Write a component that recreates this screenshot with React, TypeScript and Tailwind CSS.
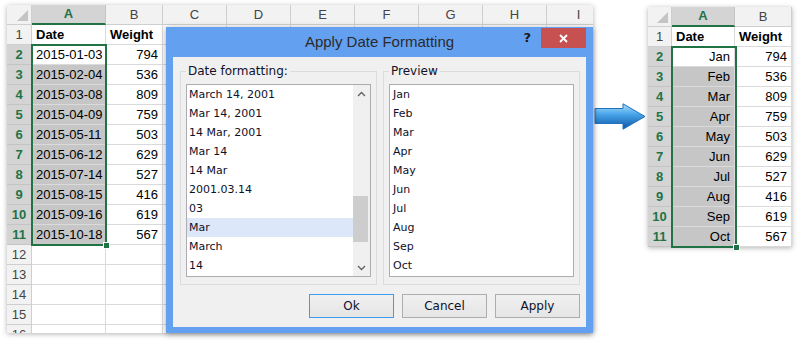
import React from 'react'

type Cell = { t: string; right?: boolean; bold?: boolean }

type SheetProps = {
  gridCols: string
  cols: string[]
  rows: Cell[][]
}

const leftRows: Cell[][] = [
  [{ t: 'Date', bold: true }, { t: 'Weight', bold: true }],
  [{ t: '2015-01-03' }, { t: '794', right: true }],
  [{ t: '2015-02-04' }, { t: '536', right: true }],
  [{ t: '2015-03-08' }, { t: '809', right: true }],
  [{ t: '2015-04-09' }, { t: '759', right: true }],
  [{ t: '2015-05-11' }, { t: '503', right: true }],
  [{ t: '2015-06-12' }, { t: '629', right: true }],
  [{ t: '2015-07-14' }, { t: '527', right: true }],
  [{ t: '2015-08-15' }, { t: '416', right: true }],
  [{ t: '2015-09-16' }, { t: '619', right: true }],
  [{ t: '2015-10-18' }, { t: '567', right: true }],
  [], [], [], [], [],
]

const months = ['Jan', 'Feb', 'Mar', 'Apr', 'May', 'Jun', 'Jul', 'Aug', 'Sep', 'Oct']
const weights = ['794', '536', '809', '759', '503', '629', '527', '416', '619', '567']

const rightRows: Cell[][] = [
  [{ t: 'Date', bold: true }, { t: 'Weight', bold: true }],
  ...months.map((m, i) => [{ t: m, right: true }, { t: weights[i], right: true }]),
]

const formats = ['March 14, 2001', 'Mar 14, 2001', '14 Mar, 2001', 'Mar 14', '14 Mar', '2001.03.14', '03', 'Mar', 'March', '14']

function Sheet({ gridCols, cols, rows }: SheetProps) {
  return (
    <div className={`grid ${gridCols} auto-rows-[20px] text-[13px] text-black font-['Liberation_Sans',sans-serif]`}>
      <div className="flex items-end justify-end pr-[3px] pb-[3px] bg-[#f2f2f2] border-r border-b border-[#cfcfcf]">
        <svg width="11" height="11" viewBox="0 0 11 11">
          <path d="M11 0 V11 H0 Z" fill="#c4c4c4" />
        </svg>
      </div>
      {cols.map((c, i) => (
        <div
          key={c}
          className={
            i === 0
              ? 'flex items-center justify-center bg-[#d4d4d4] border-r border-[#c4c4c4] border-b-2 border-b-[#217346] text-[#217346] font-bold'
              : 'flex items-center justify-center bg-[#f2f2f2] border-r border-b border-[#cfcfcf] text-[#444]'
          }
        >
          {c}
        </div>
      ))}
      {rows.map((row, r) => {
        const n = r + 1
        const sel = n >= 2 && n <= 11
        return (
          <React.Fragment key={n}>
            <div
              className={
                sel
                  ? 'flex items-center justify-center bg-[#d4d4d4] border-r border-b border-[#c4c4c4] text-[#217346] font-bold'
                  : 'flex items-center justify-center bg-[#f2f2f2] border-r border-b border-[#cfcfcf] text-[#444]'
              }
            >
              {n}
            </div>
            {cols.map((_, c) => {
              const cell = row[c]
              const fill = sel && c === 0 && n !== 2
              return (
                <div
                  key={c}
                  className={`flex items-center px-[4px] border-r border-b border-[#dadada] whitespace-nowrap overflow-hidden ${
                    fill ? 'bg-[#c6c6c6]' : 'bg-white'
                  } ${cell?.right ? 'justify-end' : 'justify-start'} ${cell?.bold ? 'font-bold' : ''}`}
                >
                  {cell?.t}
                </div>
              )
            })}
          </React.Fragment>
        )
      })}
    </div>
  )
}

function Selection({ className }: { className: string }) {
  return (
    <div className={`absolute border-2 border-[#217346] ${className}`}>
      <div className="absolute -right-[5px] -bottom-[5px] w-[7px] h-[7px] bg-[#217346] border border-white" />
    </div>
  )
}

function Chevron({ up }: { up?: boolean }) {
  return (
    <svg width="9" height="6" viewBox="0 0 9 6">
      <path d={up ? 'M1 5 L4.5 1.5 L8 5' : 'M1 1 L4.5 4.5 L8 1'} fill="none" stroke="#606060" strokeWidth="1.3" />
    </svg>
  )
}

function Dialog() {
  return (
    <div className="absolute left-[159px] top-[22px] w-[427px] h-[306px] bg-[#64a0f0] flex flex-col shadow-[0_1px_6px_rgba(0,0,0,0.35)] font-['DejaVu_Sans',sans-serif]">
      <div className="relative h-[30px] flex items-center justify-center">
        <span className="text-[15px] text-[#2b2b2b] font-['Liberation_Sans',sans-serif]">Apply Date Formatting</span>
        <div className="absolute right-[7px] top-[1px] flex items-center">
          <span className="mr-[10px] text-[13px] font-bold text-[#1a1a1a]">?</span>
          <div className="w-[45px] h-[20px] bg-[#c75050] flex items-center justify-center">
            <svg width="9" height="9" viewBox="0 0 9 9">
              <path d="M1 1 L8 8 M8 1 L1 8" stroke="white" strokeWidth="1.8" />
            </svg>
          </div>
        </div>
      </div>
      <div className="mx-[7px] mb-[6px] flex-1 bg-[#f0f0f0] pl-[7px] pr-[6px] pt-[7px] text-[11px] text-[#10102a]">
        <div className="flex gap-[6px]">
          <fieldset className="w-[197px] h-[221px] border border-[#dcdcdc] px-[5px] pt-[6px] pb-[7px]">
            <legend className="px-[2px] text-[12px] leading-[14px]">Date formatting:</legend>
            <div className="h-[193px] border border-[#abadb3] bg-white flex">
              <div className="flex-1 flex flex-col">
                {formats.map((f) => (
                  <div key={f} className={`h-[19px] leading-[19px] pl-[2px] ${f === 'Mar' ? 'bg-[#dce7f9]' : ''}`}>
                    {f}
                  </div>
                ))}
              </div>
              <div className="w-[17px] flex flex-col bg-[#f0f0f0]">
                <div className="h-[17px] flex items-center justify-center">
                  <Chevron up />
                </div>
                <div className="flex-1">
                  <div className="mt-[94px] w-[15px] h-[46px] bg-[#cdcdcd]" />
                </div>
                <div className="h-[17px] flex items-center justify-center">
                  <Chevron />
                </div>
              </div>
            </div>
          </fieldset>
          <fieldset className="w-[197px] h-[221px] border border-[#dcdcdc] px-[5px] pt-[6px] pb-[7px]">
            <legend className="px-[2px] text-[12px] leading-[14px]">Preview</legend>
            <div className="h-[193px] border border-[#abadb3] bg-white flex flex-col">
              {months.map((m) => (
                <div key={m} className="h-[19px] leading-[19px] pl-[3px]">
                  {m}
                </div>
              ))}
            </div>
          </fieldset>
        </div>
        <div className="mt-[9px] flex justify-end gap-[8px] text-[12px]">
          <button className="w-[85px] h-[24px] border border-[#3c9cf0] bg-gradient-to-b from-[#f0f0f0] to-[#e5e5e5]">Ok</button>
          <button className="w-[85px] h-[24px] border border-[#adadad] bg-gradient-to-b from-[#f0f0f0] to-[#e5e5e5]">Cancel</button>
          <button className="w-[85px] h-[24px] border border-[#adadad] bg-gradient-to-b from-[#f0f0f0] to-[#e5e5e5]">Apply</button>
        </div>
      </div>
    </div>
  )
}

function Arrow() {
  return (
    <svg width="52" height="28" viewBox="0 0 52 28">
      <defs>
        <linearGradient id="arrowFill" x1="0" y1="0" x2="0" y2="1">
          <stop offset="0" stopColor="#aee0fa" />
          <stop offset="0.4" stopColor="#4aa6ea" />
          <stop offset="1" stopColor="#0a55a6" />
        </linearGradient>
      </defs>
      <path d="M1 5.5 H29 V0.8 L51 13.5 L29 26.2 V20.5 H1 Z" fill="url(#arrowFill)" stroke="#2370bd" strokeWidth="1" />
    </svg>
  )
}

export default function App() {
  return (
    <div className="w-[803px] h-[342px] bg-white overflow-hidden flex items-start">
      <div className="relative ml-[7px] mt-[5px] w-[586px] h-[328px] shadow-[0_1px_5px_rgba(0,0,0,0.3)]">
        <div className="w-full h-full overflow-hidden">
          <Sheet
            gridCols="grid-cols-[25px_74px_57px_64px_64px_64px_64px_64px_64px_64px]"
            cols={['A', 'B', 'C', 'D', 'E', 'F', 'G', 'H', 'I']}
            rows={leftRows}
          />
        </div>
        <Selection className="left-[24px] top-[39px] w-[76px] h-[202px]" />
        <Dialog />
      </div>
      <div className="ml-[1px] mt-[103px]">
        <Arrow />
      </div>
      <div className="relative ml-[2px] mt-[7px] w-[144px] shadow-[0_1px_5px_rgba(0,0,0,0.3)]">
        <Sheet gridCols="grid-cols-[24px_63px_57px]" cols={['A', 'B']} rows={rightRows} />
        <Selection className="left-[23px] top-[39px] w-[66px] h-[202px]" />
      </div>
    </div>
  )
}
